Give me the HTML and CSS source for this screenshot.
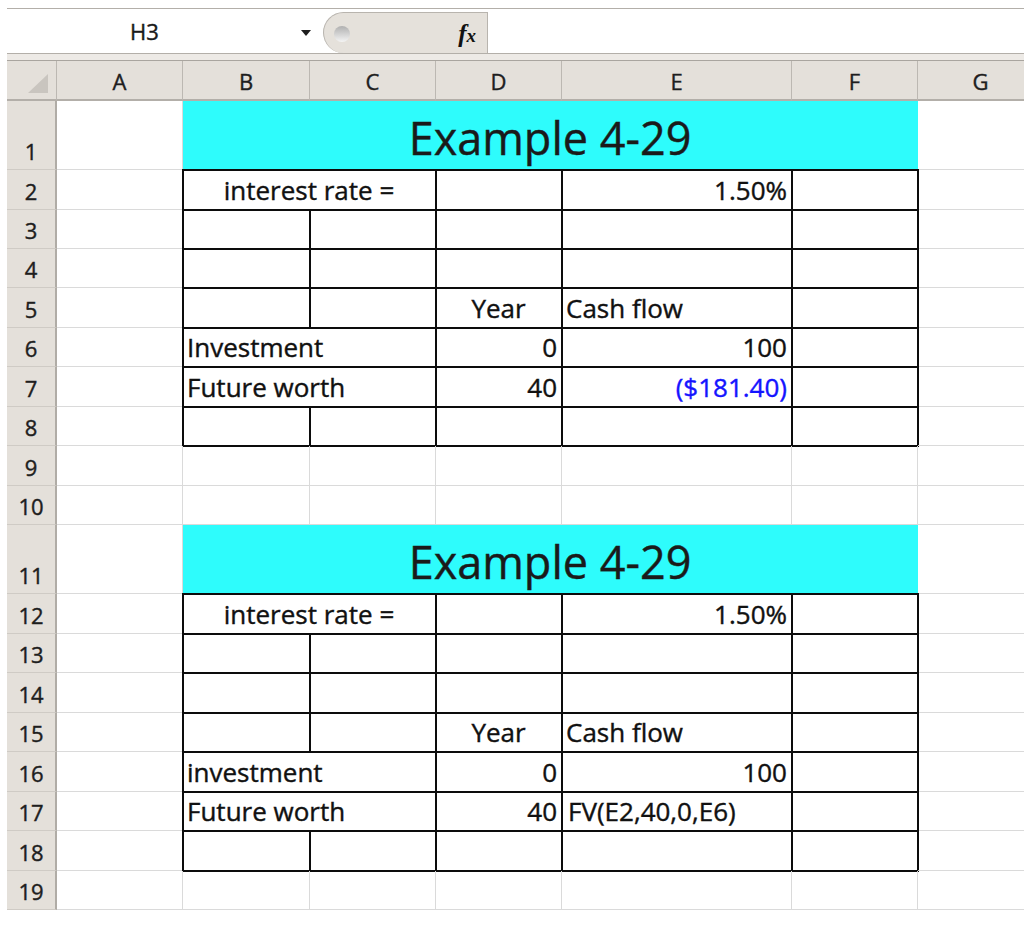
FILE: index.html
```html
<!DOCTYPE html>
<html>
<head>
<meta charset="utf-8">
<title>Example 4-29</title>
<link rel="stylesheet" href="styles.css">
</head>
<body>
<div class="app">
  <div class="fbar">
    <div class="namebox">
      <span class="name">H3</span>
      <svg class="caret" width="10" height="6" viewBox="0 0 10 6"><polygon points="0,0 10,0 5,6" fill="#1e1e1e"/></svg>
    </div>
    <div class="pill">
      <span class="dot"></span>
      <span class="fx"><i>f</i><i class="sub">x</i></span>
    </div>
    <div class="formula"></div>
  </div>
  <div class="band"></div>
  <div class="sheet">
    <div class="ch corner"><svg width="20" height="19" viewBox="0 0 20 19"><polygon points="20,0 20,19 0,19" fill="#c9c5bf"/></svg></div>
    <div class="ch">A</div><div class="ch">B</div><div class="ch">C</div><div class="ch">D</div><div class="ch">E</div><div class="ch">F</div><div class="ch">G</div>

    <div class="rh">1</div><div class="c"></div><div class="c title">Example 4-29</div><div class="c"></div>

    <div class="rh">2</div><div class="c"></div><div class="c b span2 m">interest rate =</div><div class="c b"></div><div class="c b r">1.50%</div><div class="c b"></div><div class="c"></div>

    <div class="rh">3</div><div class="c"></div><div class="c b"></div><div class="c b"></div><div class="c b"></div><div class="c b"></div><div class="c b"></div><div class="c"></div>

    <div class="rh">4</div><div class="c"></div><div class="c b"></div><div class="c b"></div><div class="c b"></div><div class="c b"></div><div class="c b"></div><div class="c"></div>

    <div class="rh">5</div><div class="c"></div><div class="c b"></div><div class="c b"></div><div class="c b m">Year</div><div class="c b">Cash flow</div><div class="c b"></div><div class="c"></div>

    <div class="rh">6</div><div class="c"></div><div class="c b span2">Investment</div><div class="c b r">0</div><div class="c b r">100</div><div class="c b"></div><div class="c"></div>

    <div class="rh">7</div><div class="c"></div><div class="c b span2">Future worth</div><div class="c b r">40</div><div class="c b r neg">($181.40)</div><div class="c b"></div><div class="c"></div>

    <div class="rh">8</div><div class="c"></div><div class="c b"></div><div class="c b"></div><div class="c b"></div><div class="c b"></div><div class="c b"></div><div class="c"></div>

    <div class="rh">9</div><div class="c"></div><div class="c"></div><div class="c"></div><div class="c"></div><div class="c"></div><div class="c"></div><div class="c"></div>

    <div class="rh">10</div><div class="c"></div><div class="c"></div><div class="c"></div><div class="c"></div><div class="c"></div><div class="c"></div><div class="c"></div>

    <div class="rh">11</div><div class="c"></div><div class="c title">Example 4-29</div><div class="c"></div>

    <div class="rh">12</div><div class="c"></div><div class="c b span2 m">interest rate =</div><div class="c b"></div><div class="c b r">1.50%</div><div class="c b"></div><div class="c"></div>

    <div class="rh">13</div><div class="c"></div><div class="c b"></div><div class="c b"></div><div class="c b"></div><div class="c b"></div><div class="c b"></div><div class="c"></div>

    <div class="rh">14</div><div class="c"></div><div class="c b"></div><div class="c b"></div><div class="c b"></div><div class="c b"></div><div class="c b"></div><div class="c"></div>

    <div class="rh">15</div><div class="c"></div><div class="c b"></div><div class="c b"></div><div class="c b m">Year</div><div class="c b">Cash flow</div><div class="c b"></div><div class="c"></div>

    <div class="rh">16</div><div class="c"></div><div class="c b span2">investment</div><div class="c b r">0</div><div class="c b r">100</div><div class="c b"></div><div class="c"></div>

    <div class="rh">17</div><div class="c"></div><div class="c b span2">Future worth</div><div class="c b r">40</div><div class="c b fv">FV(E2,40,0,E6)</div><div class="c b"></div><div class="c"></div>

    <div class="rh">18</div><div class="c"></div><div class="c b"></div><div class="c b"></div><div class="c b"></div><div class="c b"></div><div class="c b"></div><div class="c"></div>

    <div class="rh">19</div><div class="c"></div><div class="c"></div><div class="c"></div><div class="c"></div><div class="c"></div><div class="c"></div><div class="c"></div>
  </div>
</div>
</body>
</html>
```
FILE: styles.css
```css
html, body {
  margin: 0;
  background: #ffffff;
  overflow: hidden;
}
body {
  font-family: "Open Sans", "Noto Sans", sans-serif;
  color: #111;
}
.app {
  padding: 8px 0 0 7px;
  width: 1044px;
}
.fbar {
  display: flex;
  height: 44px;
  border-top: 1px solid #b3afa9;
  border-bottom: 1px solid #b3afa9;
  background: #fff;
}
.namebox {
  width: 316px;
  flex: none;
  display: flex;
  align-items: center;
  padding-left: 123px;
  box-sizing: border-box;
}
.name {
  font-size: 22px;
  line-height: 1;
  color: #1a1a1a;
  -webkit-text-stroke: 0.4px currentColor;
}
.caret {
  margin-left: auto;
  margin-right: 12px;
  margin-top: 4px;
}
.pill {
  width: 165px;
  flex: none;
  box-sizing: border-box;
  margin-top: 3px;
  height: 41px;
  border: 1px solid #b8b4ae;
  border-bottom: none;
  border-radius: 22px 0 0 22px;
  background: #e5e1db;
  display: flex;
  align-items: center;
  padding-left: 10px;
}
.dot {
  width: 16px;
  height: 16px;
  border-radius: 50%;
  background: linear-gradient(#b0b0b0, #f4f4f4);
  margin-top: 2px;
}
.fx {
  margin-left: auto;
  margin-right: 11px;
  font-family: "Liberation Serif", "DejaVu Serif", serif;
  font-weight: bold;
  font-size: 25px;
  line-height: 1;
  color: #111;
}
.fx .sub {
  font-size: 19px;
}
.formula {
  flex: 1;
  background: #fff;
}
.band {
  height: 6px;
  background: #edeae6;
  border-bottom: 1px solid #a9a59f;
}
.sheet {
  display: grid;
  grid-template-columns: 50px 126px 127px 126px 126px 230px 126px 126px;
  grid-template-rows: 40px 69px 40px 39px 39px 40px 39px 40px 39px 40px 39px 69px 40px 39px 40px 39px 40px 39px 40px 39px;
}
.ch {
  background: #e4e0da;
  border-right: 1px solid #bcb8b2;
  border-bottom: 2px solid #b3afa9;
  display: flex;
  align-items: center;
  justify-content: center;
  font-size: 22px;
  line-height: 1;
  color: #1e1e1e;
  padding-top: 2px;
  box-sizing: border-box;
  -webkit-text-stroke: 0.4px currentColor;
}
.corner {
  align-items: flex-end;
  justify-content: flex-end;
  padding: 0 8px 6px 0;
}
.corner svg {
  display: block;
}
.rh {
  background: #e4e0da;
  border-right: 2px solid #b0aca6;
  border-bottom: 1px solid #cfcbc5;
  display: flex;
  align-items: flex-end;
  justify-content: center;
  padding-bottom: 7px;
  box-sizing: border-box;
  font-size: 22px;
  line-height: 1;
  color: #1e1e1e;
  -webkit-text-stroke: 0.4px currentColor;
}
.c {
  border-right: 1px solid #dadada;
  border-bottom: 1px solid #dadada;
  display: flex;
  align-items: flex-end;
  padding: 0 4px 6px 4px;
  box-sizing: border-box;
  font-size: 26px;
  line-height: 1;
  white-space: nowrap;
  min-width: 0;
  color: #111;
  -webkit-text-stroke: 0.4px currentColor;
}
.b {
  outline: 2px solid #0c0c0c;
  outline-offset: -1px;
}
.r {
  justify-content: flex-end;
}
.m {
  justify-content: center;
}
.span2 {
  grid-column: span 2;
}
.title {
  grid-column: span 5;
  background: #2efcfc;
  border-color: transparent;
  justify-content: center;
  font-size: 45px;
  padding-bottom: 9px;
  color: #1a1a1a;
}
.neg {
  color: #1414ff;
}
.fv {
  padding-left: 6px;
}
```
